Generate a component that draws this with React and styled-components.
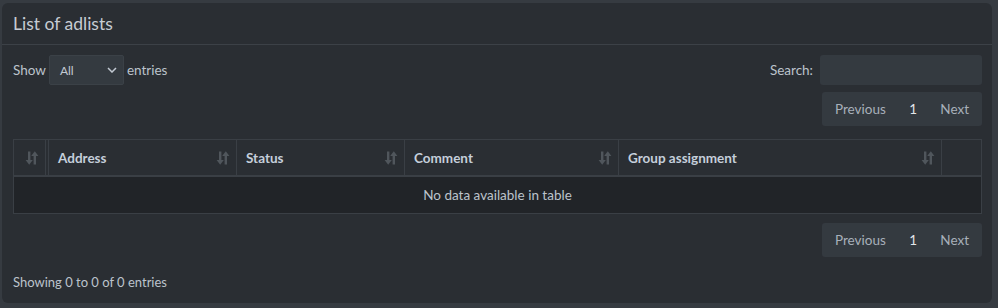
import React from "react";
import styled, { createGlobalStyle } from "styled-components";

const Global = createGlobalStyle`
  html, body { margin: 0; padding: 0; background: #363b41; }
  body { font-family: "Lato", "Liberation Sans", sans-serif; }
  * { box-sizing: border-box; }
`;

const Page = styled.div`
  padding: 3px 6px 5px 2px;
  width: 998px;
  height: 308px;
`;

const Box = styled.section`
  background: #2a2e33;
  border-radius: 6px;
  height: 300px;
  display: flex;
  flex-direction: column;
  color: #bcc3cc;
`;

const BoxHeader = styled.header`
  height: 42px;
  padding: 0 11px;
  display: flex;
  align-items: center;
  border-bottom: 1px solid #3c4147;
  font-size: 17.5px;
  color: #c7ccd4;
`;

const BoxBody = styled.div`
  padding: 10px 10px 0 11px;
  display: flex;
  flex-direction: column;
`;

const TopRow = styled.div`
  display: flex;
  justify-content: space-between;
  align-items: center;
  font-size: 13.5px;
`;

const Label = styled.label`
  display: flex;
  align-items: center;
  gap: ${(p) => p.$gap}px;
`;

const SelectBox = styled.div`
  width: 75px;
  height: 30px;
  background: #343a40;
  border: 1px solid #3b4147;
  border-radius: 2px;
  display: flex;
  align-items: center;
  justify-content: space-between;
  padding: 0 6px 0 10px;
  font-size: 12px;
  color: #c2c9d2;
`;

const SearchInput = styled.div`
  width: 162px;
  height: 30px;
  background: #343a40;
  border-radius: 3px;
`;

const PagerRow = styled.div`
  display: flex;
  justify-content: flex-end;
  margin-top: ${(p) => p.$mt}px;
`;

const Pager = styled.div`
  width: 160px;
  height: 34px;
  background: #343a40;
  border-radius: 3px;
  display: flex;
  align-items: center;
  justify-content: space-between;
  padding: 0 13px 0 13px;
  font-size: 13.5px;
  color: #a8b0ba;
`;

const PageNum = styled.span`
  color: #e2e6ea;
`;

const Table = styled.div`
  margin-top: 13px;
  border: 1px solid #3a3f45;
  display: grid;
  grid-template-columns: 32px 3px 188px 168px 214px 323px 1fr;
`;

const Th = styled.div`
  height: 37px;
  min-width: 0;
  border-right: ${(p) => (p.$last ? "none" : "1px solid #3a3f45")};
  border-bottom: 2px solid #3a3f45;
  display: flex;
  align-items: center;
  justify-content: space-between;
  padding: ${(p) => (p.$empty ? "0" : "0 6px 0 9px")};
  font-weight: 700;
  font-size: 13.5px;
  color: #c5cfdb;
`;

const Td = styled.div`
  grid-column: 1 / -1;
  height: 36px;
  background: #212428;
  display: flex;
  align-items: center;
  justify-content: center;
  font-size: 13.5px;
  color: #bcc3cc;
`;

const Footer = styled.div`
  margin-top: 17px;
  font-size: 13px;
  color: #bcc3cc;
`;

const SortIcon = () => (
  <svg width="14" height="16" viewBox="0 0 14 16">
    <g fill="#50565c">
      <rect x="3" y="1.5" width="2.4" height="9.5" />
      <polygon points="0.6,10 7.8,10 4.2,14.8" />
      <rect x="8.6" y="5" width="2.4" height="9.5" />
      <polygon points="6.2,6 13.4,6 9.8,1.2" />
    </g>
  </svg>
);

const Chevron = () => (
  <svg width="10" height="6" viewBox="0 0 10 6">
    <path d="M1 1 L5 5 L9 1" stroke="#c2c9d2" strokeWidth="1.5" fill="none" />
  </svg>
);

const cols = [
  { label: "", sort: true },
  { label: "", sort: false, empty: true },
  { label: "Address", sort: true },
  { label: "Status", sort: true },
  { label: "Comment", sort: true },
  { label: "Group assignment", sort: true },
  { label: "", sort: false, last: true, empty: true },
];

export default function App() {
  return (
    <Page>
      <Global />
      <Box>
        <BoxHeader>List of adlists</BoxHeader>
        <BoxBody>
          <TopRow>
            <Label $gap={3}>
              Show
              <SelectBox>
                All <Chevron />
              </SelectBox>
              entries
            </Label>
            <Label $gap={7}>
              Search:
              <SearchInput />
            </Label>
          </TopRow>
          <PagerRow $mt={7}>
            <Pager>
              <span>Previous</span>
              <PageNum>1</PageNum>
              <span>Next</span>
            </Pager>
          </PagerRow>
          <Table>
            {cols.map((c, i) => (
              <Th key={i} $last={c.last} $empty={c.empty}>
                {!c.empty && <span>{c.label}</span>}
                {c.sort && <SortIcon />}
              </Th>
            ))}
            <Td>No data available in table</Td>
          </Table>
          <PagerRow $mt={9}>
            <Pager>
              <span>Previous</span>
              <PageNum>1</PageNum>
              <span>Next</span>
            </Pager>
          </PagerRow>
          <Footer>Showing 0 to 0 of 0 entries</Footer>
        </BoxBody>
      </Box>
    </Page>
  );
}
